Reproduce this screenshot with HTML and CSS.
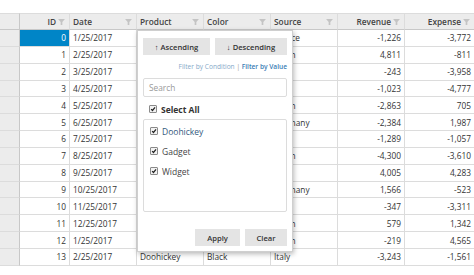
FILE: index.html
```html
<!DOCTYPE html>
<html>
<head>
<meta charset="utf-8">
<link rel="stylesheet" href="styles.css">
</head>
<body>
<div class="wrap">
  <div class="grid">
    <div class="hc rh"></div>
    <div class="hc right"><span>ID</span><svg class="fi" viewBox="0 0 8 7"><path d="M0 0H8L5 3.5V7H3V3.5Z"/></svg></div>
    <div class="hc"><span class="grow">Date</span><svg class="fi" viewBox="0 0 8 7"><path d="M0 0H8L5 3.5V7H3V3.5Z"/></svg></div>
    <div class="hc"><span class="grow">Product</span><svg class="fi" viewBox="0 0 8 7"><path d="M0 0H8L5 3.5V7H3V3.5Z"/></svg></div>
    <div class="hc"><span class="grow">Color</span><svg class="fi" viewBox="0 0 8 7"><path d="M0 0H8L5 3.5V7H3V3.5Z"/></svg></div>
    <div class="hc"><span class="grow">Source</span><svg class="fi" viewBox="0 0 8 7"><path d="M0 0H8L5 3.5V7H3V3.5Z"/></svg></div>
    <div class="hc right"><span>Revenue</span><svg class="fi" viewBox="0 0 8 7"><path d="M0 0H8L5 3.5V7H3V3.5Z"/></svg></div>
    <div class="hc right"><span>Expense</span><svg class="fi" viewBox="0 0 8 7"><path d="M0 0H8L5 3.5V7H3V3.5Z"/></svg></div>

    <div class="rh"></div><div class="c r sel">0</div><div class="c">1/25/2017</div><div class="c"></div><div class="c"></div><div class="c">France</div><div class="c r">-1,226</div><div class="c r">-3,772</div>
    <div class="rh"></div><div class="c r">1</div><div class="c">2/25/2017</div><div class="c"></div><div class="c"></div><div class="c">Japan</div><div class="c r">4,811</div><div class="c r">-811</div>
    <div class="rh"></div><div class="c r">2</div><div class="c">3/25/2017</div><div class="c"></div><div class="c"></div><div class="c"></div><div class="c r">-243</div><div class="c r">-3,958</div>
    <div class="rh"></div><div class="c r">3</div><div class="c">4/25/2017</div><div class="c"></div><div class="c"></div><div class="c"></div><div class="c r">-1,023</div><div class="c r">-4,777</div>
    <div class="rh"></div><div class="c r">4</div><div class="c">5/25/2017</div><div class="c"></div><div class="c"></div><div class="c">Japan</div><div class="c r">-2,863</div><div class="c r">705</div>
    <div class="rh"></div><div class="c r">5</div><div class="c">6/25/2017</div><div class="c"></div><div class="c"></div><div class="c">Germany</div><div class="c r">-2,384</div><div class="c r">1,987</div>
    <div class="rh"></div><div class="c r">6</div><div class="c">7/25/2017</div><div class="c"></div><div class="c"></div><div class="c"></div><div class="c r">-1,289</div><div class="c r">-1,057</div>
    <div class="rh"></div><div class="c r">7</div><div class="c">8/25/2017</div><div class="c"></div><div class="c"></div><div class="c">Japan</div><div class="c r">-4,300</div><div class="c r">-3,610</div>
    <div class="rh"></div><div class="c r">8</div><div class="c">9/25/2017</div><div class="c"></div><div class="c"></div><div class="c"></div><div class="c r">4,005</div><div class="c r">4,283</div>
    <div class="rh"></div><div class="c r">9</div><div class="c">10/25/2017</div><div class="c"></div><div class="c"></div><div class="c">Germany</div><div class="c r">1,566</div><div class="c r">-523</div>
    <div class="rh"></div><div class="c r">10</div><div class="c">11/25/2017</div><div class="c"></div><div class="c"></div><div class="c"></div><div class="c r">-347</div><div class="c r">-3,311</div>
    <div class="rh"></div><div class="c r">11</div><div class="c">12/25/2017</div><div class="c"></div><div class="c"></div><div class="c">Japan</div><div class="c r">579</div><div class="c r">1,342</div>
    <div class="rh"></div><div class="c r">12</div><div class="c">1/25/2017</div><div class="c"></div><div class="c"></div><div class="c">Japan</div><div class="c r">-219</div><div class="c r">4,565</div>
    <div class="rh"></div><div class="c r">13</div><div class="c">2/25/2017</div><div class="c">Doohickey</div><div class="c">Black</div><div class="c">Italy</div><div class="c r">-3,243</div><div class="c r">-1,561</div>
  </div>

  <div class="dropdown">
    <div class="sortrow">
      <button class="btn asc">↑ Ascending</button>
      <button class="btn desc">↓ Descending</button>
    </div>
    <div class="links"><span class="cond">Filter by Condition</span> <span class="sep">|</span> <span class="val">Filter by Value</span></div>
    <div class="search">Search</div>
    <div class="chk all"><span class="box"><svg viewBox="0 0 8 8"><path d="M1.5 4.2L3.3 6L6.7 1.8"/></svg></span><span>Select All</span></div>
    <div class="list">
      <div class="chk item first"><span class="box"><svg viewBox="0 0 8 8"><path d="M1.5 4.2L3.3 6L6.7 1.8"/></svg></span><span>Doohickey</span></div>
      <div class="chk item"><span class="box"><svg viewBox="0 0 8 8"><path d="M1.5 4.2L3.3 6L6.7 1.8"/></svg></span><span>Gadget</span></div>
      <div class="chk item"><span class="box"><svg viewBox="0 0 8 8"><path d="M1.5 4.2L3.3 6L6.7 1.8"/></svg></span><span>Widget</span></div>
    </div>
    <div class="actions">
      <button class="btn apply">Apply</button>
      <button class="btn clear">Clear</button>
    </div>
  </div>
</div>
</body>
</html>
```

FILE: styles.css
```css
html, body {
  margin: 0;
  padding: 0;
  background: #fff;
}
body {
  font-family: "Open Sans", "Noto Sans", sans-serif;
  font-size: 8.3px;
  color: #333;
  overflow: hidden;
}
.wrap {
  position: relative;
  padding-top: 13px;
  width: 474px;
  height: 262px;
}
.grid {
  display: grid;
  grid-template-columns: 20px 50px 67px 67px 67px 67px 67px 70px;
  grid-template-rows: 17px;
  grid-auto-rows: 16.85px;
  width: 475px;
  overflow: hidden;
}
.grid > div {
  box-sizing: border-box;
  border-right: 1px solid #dcdcdc;
  border-bottom: 1px solid #dcdcdc;
  white-space: nowrap;
  overflow: hidden;
  display: flex;
  align-items: center;
}
.hc {
  background: #ececec;
  font-weight: 600;
  color: #444;
  padding: 0 4px 0 3px;
  border-top: 1px solid #dcdcdc;
  border-bottom-color: #c8c8c8 !important;
}
.hc.right {
  justify-content: flex-end;
}
.hc .grow {
  flex: 1;
}
.fi {
  width: 7px;
  height: 6px;
  margin-left: 2px;
  fill: #c4c4c4;
  flex: none;
}
.rh {
  background: #ececec;
  border-right-color: #c8c8c8 !important;
}
.c {
  padding: 0 3px;
  background: #fff;
}
.c.r {
  justify-content: flex-end;
}
.c.sel {
  background: #0085c7;
  color: #fff;
}

.dropdown {
  position: absolute;
  left: 137px;
  top: 30px;
  width: 156px;
  height: 222px;
  box-sizing: border-box;
  background: #fff;
  border: 1px solid #cfcfcf;
  box-shadow: 1px 2px 5px rgba(0, 0, 0, 0.28);
  padding: 7px 5px 0 5px;
  display: flex;
  flex-direction: column;
}
.btn {
  font-family: "Open Sans", "Noto Sans", sans-serif;
  font-size: 7.6px;
  font-weight: 600;
  color: #333;
  background: #e4e4e4;
  border: none;
  border-radius: 0;
  padding: 0;
  margin: 0;
  height: 17px;
}
.sortrow {
  display: flex;
  justify-content: space-between;
}
.asc {
  width: 67px;
}
.desc {
  width: 72px;
}
.links {
  margin-top: 7px;
  text-align: right;
  font-size: 6.6px;
  height: 10px;
  line-height: 10px;
}
.cond {
  color: #86a9c8;
}
.sep {
  color: #999;
}
.val {
  color: #3a7db5;
  font-weight: 600;
}
.search {
  margin-top: 6px;
  height: 19px;
  box-sizing: border-box;
  border: 1px solid #dcdcdc;
  border-radius: 2px;
  color: #999;
  padding-left: 5px;
  display: flex;
  align-items: center;
  font-size: 8.3px;
}
.chk {
  display: flex;
  align-items: center;
  height: 12px;
}
.chk.all {
  margin-top: 6px;
  padding-left: 6px;
  font-weight: 700;
  color: #333;
  font-size: 8.5px;
}
.box {
  width: 6px;
  height: 6px;
  border: 1px solid #8a8a8a;
  background: #f2f2f2;
  border-radius: 1px;
  margin-right: 4px;
  display: flex;
  flex: none;
}
.box svg {
  width: 6px;
  height: 6px;
  fill: none;
  stroke: #222;
  stroke-width: 1.6;
}
.list {
  margin-top: 4px;
  height: 93px;
  box-sizing: border-box;
  border: 1px solid #dcdcdc;
  border-radius: 2px;
  padding: 5px 0 0 6px;
  display: flex;
  flex-direction: column;
  gap: 8px;
}
.item {
  font-size: 8.5px;
  color: #444;
}
.item.first {
  color: #34597e;
}
.actions {
  margin-top: 17px;
  display: flex;
  justify-content: flex-end;
  gap: 5px;
}
.apply {
  width: 45px;
}
.clear {
  width: 42px;
}
```
